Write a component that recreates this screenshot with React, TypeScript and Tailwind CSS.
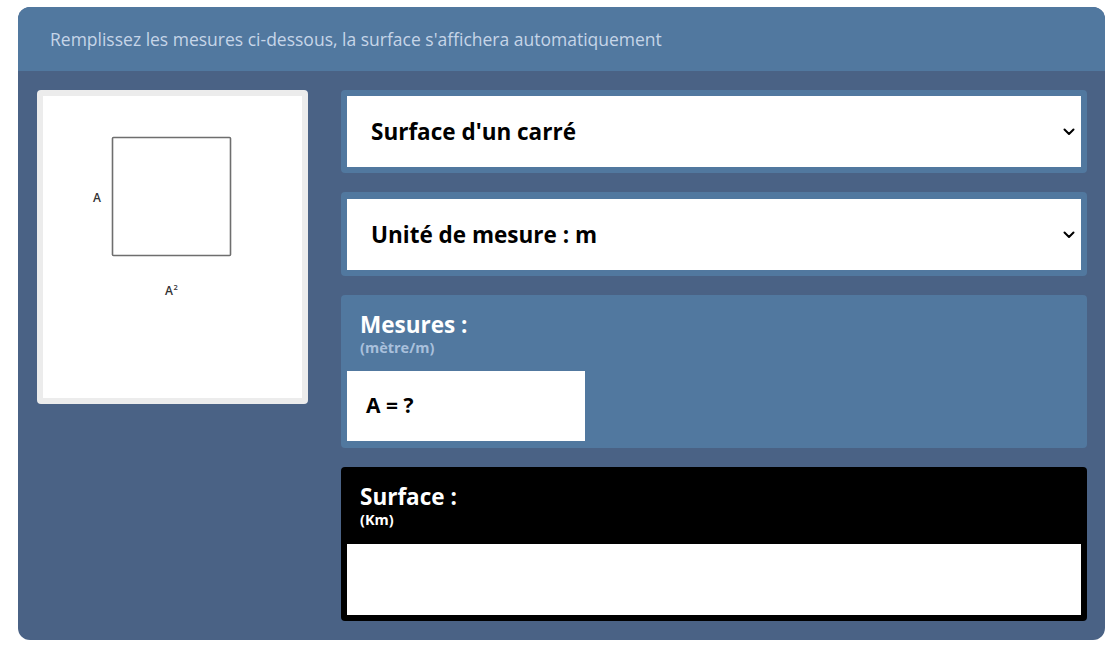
import React from "react";

function Chevron() {
  return (
    <svg width="12" height="8" viewBox="0 0 12 8" className="shrink-0">
      <path d="M1.5 1.5 L6 6 L10.5 1.5" fill="none" stroke="#000" strokeWidth="2" strokeLinecap="round" strokeLinejoin="round" />
    </svg>
  );
}

function SelectCard({ label, top }: { label: string; top: string }) {
  return (
    <div className={"rounded-[4px] bg-[#51789f] px-[6px] pb-[6px] " + top}>
      <div className="flex h-[71px] items-center justify-between bg-white pl-[24px] pr-[6px]">
        <span className="text-[22.5px] font-bold text-black">{label}</span>
        <Chevron />
      </div>
    </div>
  );
}

export default function App() {
  return (
    <div className="min-h-[650px] bg-white pt-[7px] pl-[18px]" style={{ fontFamily: '"Open Sans", "Noto Sans", sans-serif' }}>
      <div className="w-[1087px] h-[633px] overflow-hidden rounded-[12px] bg-[#4a6285] flex flex-col">
        <div className="h-[64px] bg-[#51789f] flex items-center pl-[32px] text-[17.5px] text-[#c6d5e8]">
          Remplissez les mesures ci-dessous, la surface s'affichera automatiquement
        </div>
        <div className="flex flex-1 pt-[19px] pl-[19px] pr-[18px] gap-[33px]">
          <div className="w-[271px] h-[314px] rounded-[4px] border-[6px] border-[#ececec] bg-white shrink-0">
            <svg width="259" height="302" viewBox="0 0 259 302">
              <rect x="69.5" y="41.5" width="118" height="118" rx="1" fill="none" stroke="#6e6e6e" strokeWidth="1.6" />
              <text x="50" y="106" fontSize="12" fontWeight="600" fill="#333" fontFamily="Open Sans, sans-serif">A</text>
              <text x="122" y="199" fontSize="12" fontWeight="600" fill="#333" fontFamily="Open Sans, sans-serif">A</text>
              <text x="130.5" y="194" fontSize="7.5" fontWeight="600" fill="#333" fontFamily="Open Sans, sans-serif">2</text>
            </svg>
          </div>
          <div className="flex flex-1 flex-col gap-[19px]">
            <SelectCard label="Surface d'un carré" top="pt-[6px]" />
            <SelectCard label="Unité de mesure : m" top="pt-[7px]" />
            <div className="rounded-[4px] bg-[#51789f] pb-[7px]">
              <div className="pl-[19px] pt-[17px] pb-[16px]">
                <div className="text-[22.5px] leading-[26px] font-bold text-white">Mesures :</div>
                <div className="mt-[3px] text-[14.5px] leading-[14px] font-bold text-[#a9c0dc]">(mètre/m)</div>
              </div>
              <div className="ml-[6px] w-[238px] h-[70px] bg-white flex items-center pl-[19px] text-[21px] font-bold text-black">
                A = ?
              </div>
            </div>
            <div className="rounded-[4px] bg-black pb-[6px]">
              <div className="pl-[19px] pt-[17px] pb-[17px]">
                <div className="text-[22.5px] leading-[26px] font-bold text-white">Surface :</div>
                <div className="mt-[3px] text-[14.5px] leading-[14px] font-bold text-white">(Km)</div>
              </div>
              <div className="mx-[6px] h-[71px] bg-white"></div>
            </div>
          </div>
        </div>
      </div>
    </div>
  );
}
